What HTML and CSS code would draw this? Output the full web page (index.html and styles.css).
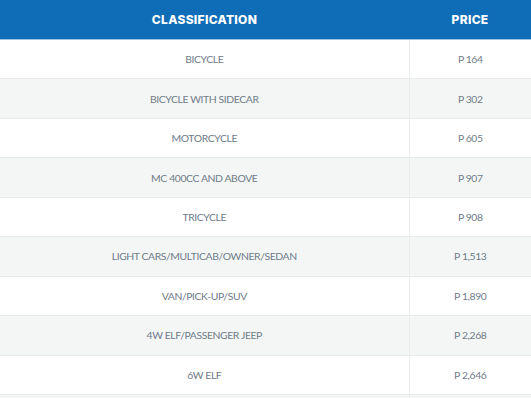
FILE: index.html
```html
<!DOCTYPE html>
<html>
<head>
<meta charset="utf-8">
<link rel="stylesheet" href="styles.css">
</head>
<body>
<table class="rates">
  <thead>
    <tr><th class="c-class">CLASSIFICATION</th><th class="c-price">PRICE</th></tr>
  </thead>
  <tbody>
    <tr><td>BICYCLE</td><td>P 164</td></tr>
    <tr><td>BICYCLE WITH SIDECAR</td><td>P 302</td></tr>
    <tr><td>MOTORCYCLE</td><td>P 605</td></tr>
    <tr><td>MC 400CC AND ABOVE</td><td>P 907</td></tr>
    <tr><td>TRICYCLE</td><td>P 908</td></tr>
    <tr><td>LIGHT CARS/MULTICAB/OWNER/SEDAN</td><td>P 1,513</td></tr>
    <tr><td>VAN/PICK-UP/SUV</td><td>P 1,890</td></tr>
    <tr><td>4W ELF/PASSENGER JEEP</td><td>P 2,268</td></tr>
    <tr><td>6W ELF</td><td>P 2,646</td></tr>
    <tr><td></td><td></td></tr>
  </tbody>
</table>
</body>
</html>
```
FILE: styles.css
```css
html, body { margin: 0; padding: 0; background: #fff; overflow: hidden; }
.rates {
  width: 531px;
  border-collapse: collapse;
  table-layout: fixed;
}
.rates th {
  background: #0f6cb6;
  color: #fff;
  font-family: Inter, "Open Sans", sans-serif;
  font-weight: 800;
  font-size: 12px;
  letter-spacing: 0.3px;
  height: 39px;
  padding: 0;
  border-bottom: 1px solid #9cc3e4;
  text-align: center;
}
.rates .c-class { width: 409px; }
.rates td {
  font-family: Lato, sans-serif;
  font-size: 10.4px;
  letter-spacing: -0.4px;
  color: #6f7b87;
  text-align: center;
  height: 38.45px;
  padding: 0;
  border-bottom: 1px solid #e6eaea;
}
.rates td + td { border-left: 1px solid #e9eded; }
.rates tbody tr:nth-child(even) td { background: #f4f6f6; }
```
